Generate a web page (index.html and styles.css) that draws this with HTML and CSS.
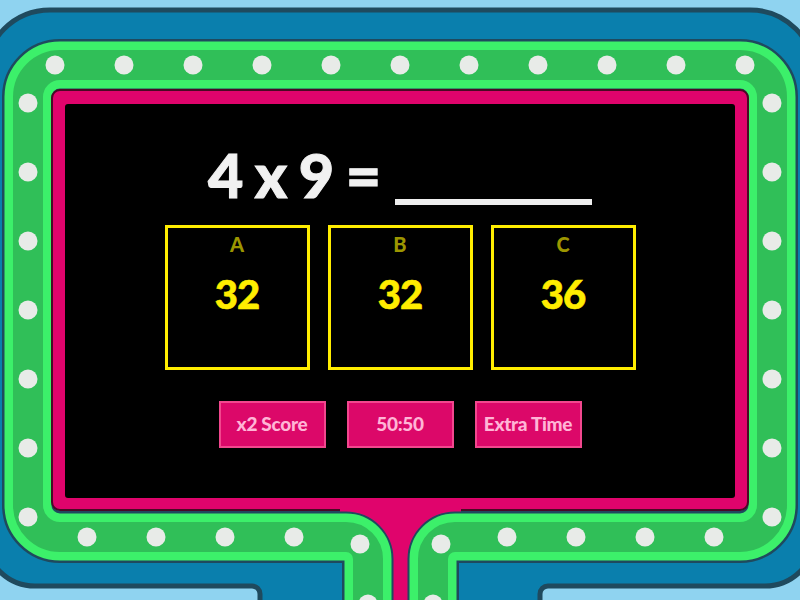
FILE: index.html
```html
<!DOCTYPE html>
<html lang="en">
<head>
<meta charset="utf-8">
<title>Quiz</title>
<link rel="stylesheet" href="styles.css">
</head>
<body>
<div class="stage">
  <svg class="frame" viewBox="0 0 800 600" width="800" height="600" aria-hidden="true">
    <path class="blue" d="M -15,75 A65,65 0 0 1 50,10 L 750,10 A65,65 0 0 1 815,75 L 815,536 A50,50 0 0 1 765,586 L 548,586 A8,8 0 0 0 540,594 L 540,620 L 260,620 L 260,594 A8,8 0 0 0 252,586 L 35,586 A50,50 0 0 1 -15,536 Z"/>
    <g class="ring">
      <path class="ring-outline" d="M 368,640 L 368,559 A22,22 0 0 0 346,537 L 60,537 A32,32 0 0 1 28,505 L 28,97 A32,32 0 0 1 60,65 L 740,65 A32,32 0 0 1 772,97 L 772,505 A32,32 0 0 1 740,537 L 455,537 A22,22 0 0 0 433,559 L 433,640"/>
      <path class="ring-bright" d="M 368,640 L 368,559 A22,22 0 0 0 346,537 L 60,537 A32,32 0 0 1 28,505 L 28,97 A32,32 0 0 1 60,65 L 740,65 A32,32 0 0 1 772,97 L 772,505 A32,32 0 0 1 740,537 L 455,537 A22,22 0 0 0 433,559 L 433,640"/>
      <path class="ring-dark" d="M 368,640 L 368,559 A22,22 0 0 0 346,537 L 60,537 A32,32 0 0 1 28,505 L 28,97 A32,32 0 0 1 60,65 L 740,65 A32,32 0 0 1 772,97 L 772,505 A32,32 0 0 1 740,537 L 455,537 A22,22 0 0 0 433,559 L 433,640"/>
    </g>
    <g class="dots">
      <circle cx="55" cy="65" r="9.5"/><circle cx="124" cy="65" r="9.5"/><circle cx="193" cy="65" r="9.5"/><circle cx="262" cy="65" r="9.5"/><circle cx="331" cy="65" r="9.5"/><circle cx="400" cy="65" r="9.5"/><circle cx="469" cy="65" r="9.5"/><circle cx="538" cy="65" r="9.5"/><circle cx="607" cy="65" r="9.5"/><circle cx="676" cy="65" r="9.5"/><circle cx="745" cy="65" r="9.5"/>
      <circle cx="28" cy="103" r="9.5"/><circle cx="28" cy="172" r="9.5"/><circle cx="28" cy="241" r="9.5"/><circle cx="28" cy="310" r="9.5"/><circle cx="28" cy="379" r="9.5"/><circle cx="28" cy="448" r="9.5"/><circle cx="28" cy="517" r="9.5"/>
      <circle cx="772" cy="103" r="9.5"/><circle cx="772" cy="172" r="9.5"/><circle cx="772" cy="241" r="9.5"/><circle cx="772" cy="310" r="9.5"/><circle cx="772" cy="379" r="9.5"/><circle cx="772" cy="448" r="9.5"/><circle cx="772" cy="517" r="9.5"/>
      <circle cx="87" cy="537" r="9.5"/><circle cx="156" cy="537" r="9.5"/><circle cx="225" cy="537" r="9.5"/><circle cx="294" cy="537" r="9.5"/><circle cx="360" cy="544" r="9.5"/><circle cx="368" cy="604" r="9.5"/>
      <circle cx="441" cy="544" r="9.5"/><circle cx="433" cy="604" r="9.5"/><circle cx="507" cy="537" r="9.5"/><circle cx="576" cy="537" r="9.5"/><circle cx="645" cy="537" r="9.5"/><circle cx="714" cy="537" r="9.5"/>
    </g>
    <rect class="panel" x="52" y="90" width="696" height="420" rx="8"/>
    <path class="stem" d="M 340,504 L 340,511.5 L 346,511.5 A47.5,47.5 0 0 1 393.5,559 L 393.5,620 L 407.5,620 L 407.5,559 A47.5,47.5 0 0 1 455,511.5 L 461,511.5 L 461,504 Z"/>
  </svg>

  <main class="screen">
    <h1 class="question"><span class="expr">4 x 9 =</span><span class="blank"></span></h1>
    <div class="answers">
      <div class="answer"><span class="letter">A</span><span class="value">32</span></div>
      <div class="answer"><span class="letter">B</span><span class="value">32</span></div>
      <div class="answer"><span class="letter">C</span><span class="value">36</span></div>
    </div>
    <div class="powerups">
      <button class="power">x2 Score</button>
      <button class="power">50:50</button>
      <button class="power">Extra Time</button>
    </div>
  </main>
</div>
</body>
</html>
```

FILE: styles.css
```css
* { box-sizing: border-box; }

html, body {
  margin: 0;
  padding: 0;
  background: #8fd3f0;
}

.stage {
  position: relative;
  width: 800px;
  height: 600px;
  overflow: hidden;
  background: #8fd3f0;
  padding: 104px 0 0 65px;
  font-family: Lato, Roboto, "Noto Sans", sans-serif;
}

.frame {
  position: absolute;
  left: 0;
  top: 0;
}

.blue {
  fill: #0a7fad;
  stroke: #1f4a5e;
  stroke-width: 5;
}

.ring path {
  fill: none;
  stroke-linejoin: round;
}
.ring-outline { stroke: #1f4a5e; stroke-width: 52; }
.ring-bright { stroke: #3cf06a; stroke-width: 47; }
.ring-dark { stroke: #30bf58; stroke-width: 30; }

.dots circle { fill: #e8ebe8; }

.panel {
  fill: #e0046c;
  stroke: #4a0a24;
  stroke-width: 2;
}
.stem { fill: #e0046c; }

.screen {
  position: relative;
  width: 670px;
  height: 394px;
  background: #000;
  border-radius: 3px;
  display: flex;
  flex-direction: column;
  align-items: center;
}

.question {
  margin: 40px 0 0;
  font-size: 61px;
  line-height: 62px;
  font-weight: 900;
  color: #f1f1f1;
  white-space: nowrap;
  word-spacing: -3px;
  -webkit-text-stroke: 1px #f1f1f1;
}

.blank {
  display: inline-block;
  width: 197px;
  height: 6px;
  margin-left: 14px;
  background: #eeeeee;
  vertical-align: -7px;
}

.answers {
  display: flex;
  gap: 18px;
  margin-top: 19px;
}

.answer {
  width: 145px;
  height: 145px;
  border: 3px solid #ffed00;
  display: flex;
  flex-direction: column;
  align-items: center;
}

.letter {
  margin-top: 6px;
  font-size: 20px;
  line-height: 20px;
  font-weight: 900;
  color: #9c9600;
}

.value {
  margin-top: 20px;
  font-size: 40px;
  line-height: 40px;
  font-weight: 900;
  color: #ffed00;
  letter-spacing: -1px;
  -webkit-text-stroke: 0.6px #ffed00;
}

.powerups {
  display: flex;
  gap: 21px;
  margin-top: 31px;
}

.power {
  width: 107px;
  height: 47px;
  padding: 0 0 2px;
  background: #dc0869;
  border: 2px solid #f2478e;
  color: #ffb5d6;
  font-family: Lato, Roboto, "Noto Sans", sans-serif;
  font-size: 19px;
  font-weight: 900;
  letter-spacing: -0.3px;
}
```
